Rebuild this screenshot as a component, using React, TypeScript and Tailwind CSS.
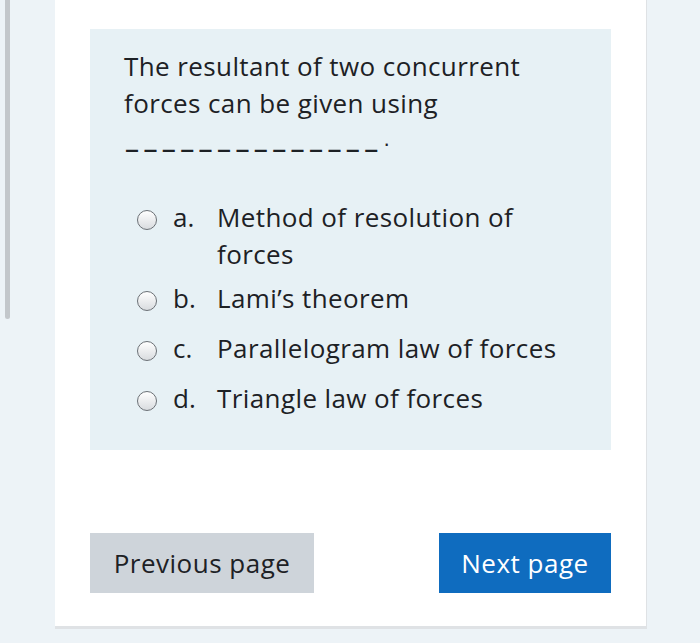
import React from 'react';

const options = [
  { letter: 'a.', text: ['Method of resolution of', 'forces'], gap: 'mb-[7px]' },
  { letter: 'b.', text: ['Lami’s theorem'], gap: 'mb-[13px]' },
  { letter: 'c.', text: ['Parallelogram law of forces'], gap: 'mb-[13px]' },
  { letter: 'd.', text: ['Triangle law of forces'], gap: 'mb-0' },
];

export default function App() {
  return (
    <div
      className="relative h-[643px] w-[700px] overflow-hidden bg-[#edf3f7] text-[#1d2125]"
      style={{ fontFamily: '"Open Sans", "DejaVu Sans", sans-serif' }}
    >
      {/* page scrollbar */}
      <div className="absolute left-[5px] top-0 h-[319px] w-[5px] rounded-b-full bg-[#c3c7cb]" />

      <div className="ml-[55px] h-[629px] w-[592px] border-r border-b-[3px] border-[#dfe2e5] bg-white pl-[35px] pr-[35px] pt-[29px]">
        <div className="h-[421px] bg-[#e7f1f5] pl-[34px] pr-6 pt-[19px]">
          <p className="text-[26px] leading-[37px] tracking-[0.4px]">
            The resultant of two concurrent
            <br />
            forces can be given using
          </p>
          <p
            className="-mt-[2px] ml-[2px] text-[24px] font-bold leading-[37px] tracking-[6.4px]"
            style={{ fontFamily: '"DejaVu Sans", sans-serif' }}
          >
            ______________<span className="text-[20px] font-normal tracking-normal">.</span>
          </p>

          <div className="mt-[41px] flex flex-col">
            {options.map((o, i) => (
              <div key={i} className={`flex items-start pl-[13px] ${o.gap}`}>
                <span className="mt-[11px] mr-[16px] h-[20px] w-[20px] shrink-0 rounded-full border-[1.5px] border-[#6b7075] bg-gradient-to-b from-white to-[#d9dcdf]" />
                <span className="w-[44px] text-[26px] leading-[37px]">{o.letter}</span>
                <span className="text-[26px] leading-[37px] tracking-[0.4px]">
                  {o.text.map((t, j) => (
                    <React.Fragment key={j}>
                      {j > 0 && <br />}
                      {t}
                    </React.Fragment>
                  ))}
                </span>
              </div>
            ))}
          </div>
        </div>

        <div className="mt-[83px] flex items-center justify-between">
          <button className="h-[60px] w-[224px] bg-[#ced4da] text-[26px] tracking-[0.5px] text-[#1d2125]">
            Previous page
          </button>
          <button className="h-[60px] w-[172px] bg-[#0f6cbf] text-[26px] tracking-[0.5px] text-white">
            Next page
          </button>
        </div>
      </div>
    </div>
  );
}
